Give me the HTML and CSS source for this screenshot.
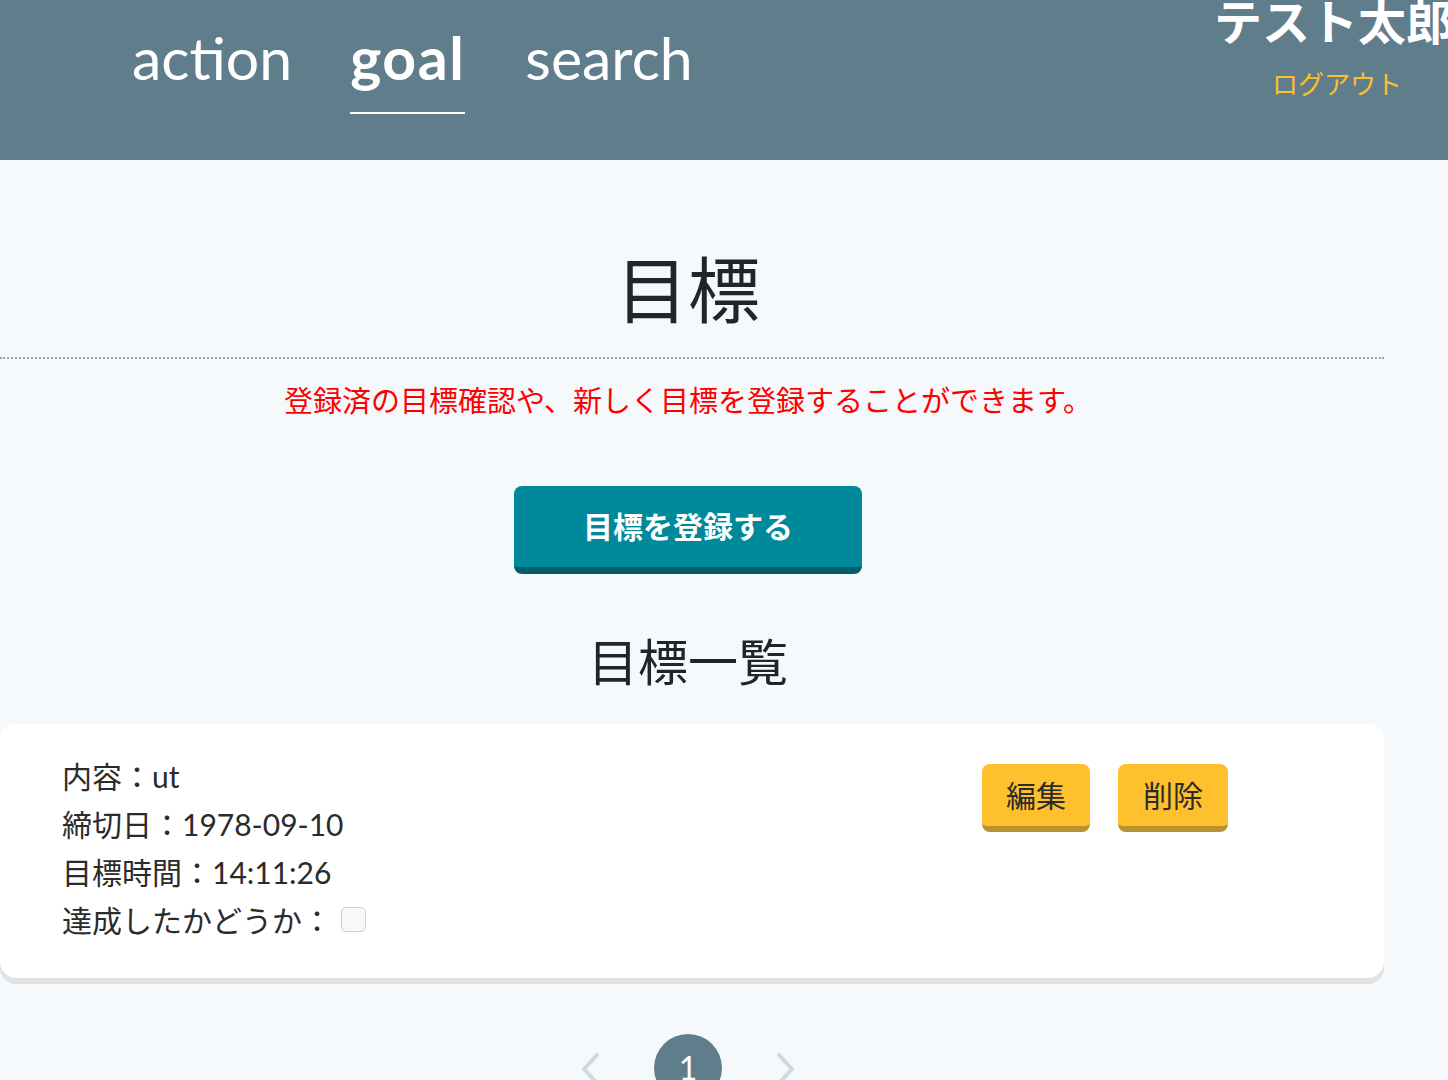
FILE: index.html
```html
<!DOCTYPE html>
<html lang="ja">
<head>
<meta charset="utf-8">
<title>目標</title>
<link rel="stylesheet" href="styles.css">
</head>
<body>
<header class="site-header">
  <nav class="nav">
    <a class="nav-item" href="#">action</a>
    <a class="nav-item active" href="#">goal</a>
    <a class="nav-item" href="#">search</a>
  </nav>
  <div class="user">
    <div class="user-name">テスト太郎</div>
    <a class="logout" href="#">ログアウト</a>
  </div>
</header>
<main class="main">
  <h1 class="page-title center">目標</h1>
  <p class="notice center">登録済の目標確認や、新しく目標を登録することができます。</p>
  <div class="center btn-row"><a class="btn-primary" href="#">目標を登録する</a></div>
  <h2 class="list-title center">目標一覧</h2>
  <section class="card">
    <div class="card-info">
      <div class="line">内容：ut</div>
      <div class="line">締切日：1978-09-10</div>
      <div class="line">目標時間：14:11:26</div>
      <div class="line">達成したかどうか：<input class="check" type="checkbox"></div>
    </div>
    <div class="card-actions">
      <a class="btn-yellow" href="#">編集</a>
      <a class="btn-yellow" href="#">削除</a>
    </div>
  </section>
  <div class="pager center">
    <span class="pager-arrow"><svg width="20" height="34" viewBox="0 0 20 34"><path d="M17 3 L4 17 L17 31" fill="none" stroke="#cfd8dc" stroke-width="4" stroke-linecap="round" stroke-linejoin="round"/></svg></span>
    <span class="pager-page">1</span>
    <span class="pager-arrow"><svg width="20" height="34" viewBox="0 0 20 34"><path d="M3 3 L16 17 L3 31" fill="none" stroke="#cfd8dc" stroke-width="4" stroke-linecap="round" stroke-linejoin="round"/></svg></span>
  </div>
</main>
</body>
</html>
```
FILE: styles.css
```css
* { box-sizing: border-box; }
html, body { margin: 0; padding: 0; }
body {
  background: #f5f9fc;
  color: #212529;
  font-family: "Lato", "Noto Sans CJK JP", sans-serif;
  overflow: hidden;
}
a { text-decoration: none; }

.site-header {
  height: 160px;
  background: #607d8b;
  display: flex;
  justify-content: space-between;
  align-items: flex-start;
}
.nav {
  display: flex;
  gap: 60px;
  padding-left: 132px;
  padding-top: 28px;
}
.nav-item {
  color: #fff;
  font-size: 59px;
  line-height: 1;
  padding-bottom: 25px;
  border-bottom: 2px solid transparent;
}
.nav-item.active {
  font-weight: 700;
  letter-spacing: 1.5px;
  margin-left: -2px;
  border-bottom-color: #fff;
}
.nav-item.last {
  letter-spacing: 1px;
}
.user {
  width: 160px;
  margin-right: 34px;
  display: flex;
  flex-direction: column;
  align-items: center;
  margin-top: -6px;
}
.user-name {
  white-space: nowrap;
  color: #fff;
  font-weight: 700;
  font-size: 48px;
  line-height: 56px;
}
.logout {
  color: #fbc02d;
  font-size: 26px;
  line-height: 40px;
  margin-top: 14px;
  margin-left: 6px;
  white-space: nowrap;
}

.main {
  width: 1384px;
}
.center {
  text-align: center;
  padding-right: 8px;
}
.page-title {
  margin: 89px 0 0;
  font-size: 72px;
  font-weight: 400;
  line-height: 80px;
  padding-bottom: 28px;
  border-bottom: 2px dotted #90a4ae;
}
.notice {
  margin: 22px 0 0;
  color: #ff0000;
  font-size: 29px;
  line-height: 40px;
}
.btn-row {
  margin-top: 65px;
}
.btn-primary {
  display: inline-block;
  background: #00899a;
  color: #fff;
  font-weight: 700;
  font-size: 30px;
  line-height: 41px;
  padding: 20px 69px;
  border-bottom: 7px solid #005e6c;
  border-radius: 8px;
}
.list-title {
  margin: 58px 0 0;
  font-size: 50px;
  font-weight: 400;
  line-height: 60px;
}
.card {
  margin-top: 32px;
  background: #fff;
  border-radius: 16px;
  box-shadow: 0 6px 0 #e2e2e2;
  display: flex;
  padding: 28px 156px 34px 62px;
}
.card-info {
  flex: 1;
  font-size: 30px;
  line-height: 48px;
  color: #2b2b2b;
}
.check {
  appearance: none;
  -webkit-appearance: none;
  width: 25px;
  height: 25px;
  margin: 0 0 0 9px;
  border: 1.5px solid #cfcfcf;
  border-radius: 5px;
  background: #f8f8f8;
  vertical-align: middle;
  position: relative;
  top: -5px;
}
.card-actions {
  display: flex;
  gap: 28px;
  align-items: flex-start;
  margin-top: 12px;
}
.btn-yellow {
  display: inline-block;
  background: #ffc02d;
  color: #2b2b2b;
  font-size: 30px;
  line-height: 44px;
  padding: 9px 24px;
  border-bottom: 6px solid #b99130;
  border-radius: 8px;
}
.btn-yellow + .btn-yellow {
  padding: 9px 25px;
}
.pager {
  margin-top: 56px;
  display: flex;
  justify-content: center;
  align-items: flex-start;
  gap: 54px;
}
.pager-arrow {
  display: flex;
  margin-top: 18px;
}
.pager-page {
  width: 68px;
  height: 68px;
  border-radius: 50%;
  background: #607d8b;
  color: #fff;
  font-size: 32px;
  line-height: 68px;
  text-align: center;
}
```
